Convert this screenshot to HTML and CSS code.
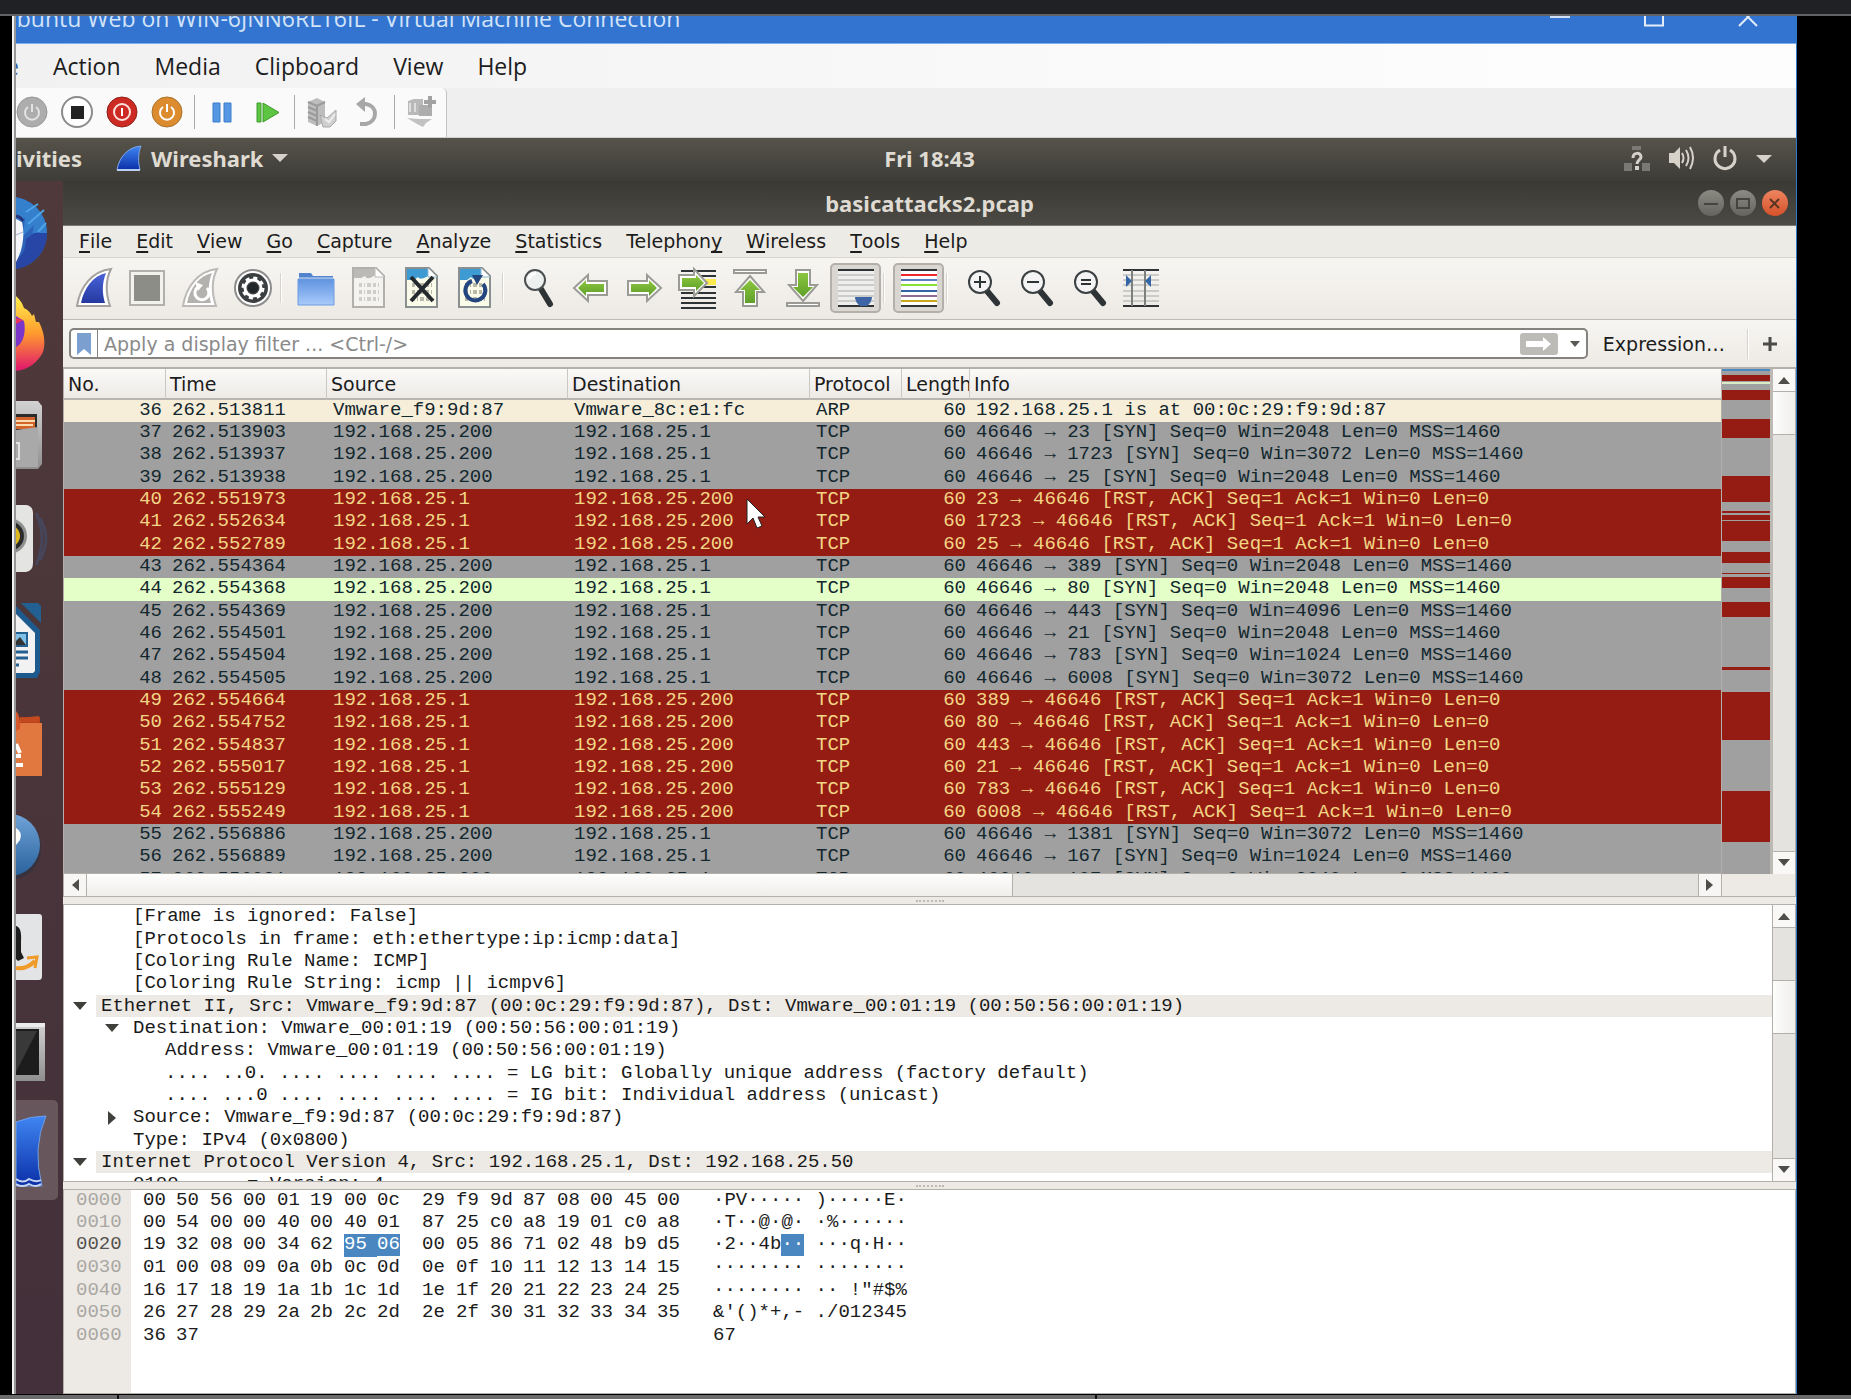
FILE: index.html
```html
<!DOCTYPE html>
<html lang="en">
<head>
    <meta charset="UTF-8">
    <meta name="viewport" content="width=device-width, initial-scale=1.0">
    <title>basicattacks2.pcap</title>
    <link rel="stylesheet" href="styles.css">
</head>
<body>
    <!-- shared shapes -->
    <svg class="defs" width="0" height="0">
        <defs>
            <linearGradient id="finBlue" x1="0" y1="0" x2="0" y2="1"><stop offset="0" stop-color="#4a63d8"/><stop offset="1" stop-color="#2438a0"/></linearGradient>
            <linearGradient id="finDock" x1="0" y1="0" x2="0" y2="1"><stop offset="0" stop-color="#3f86f2"/><stop offset="1" stop-color="#0b2fa8"/></linearGradient>
            <linearGradient id="green" x1="0" y1="0" x2="0" y2="1"><stop offset="0" stop-color="#8cc63f"/><stop offset="1" stop-color="#5fa02a"/></linearGradient>
            <linearGradient id="folder" x1="0" y1="0" x2="0" y2="1"><stop offset="0" stop-color="#5f93df"/><stop offset="1" stop-color="#a9cbfb"/></linearGradient>
            <linearGradient id="fox" x1="0" y1="0" x2="0" y2="1"><stop offset="0" stop-color="#fff04d"/><stop offset="0.5" stop-color="#ff9a2e"/><stop offset="1" stop-color="#e0146e"/></linearGradient>
            <linearGradient id="silver" x1="0" y1="0" x2="0" y2="1"><stop offset="0" stop-color="#d2d2d2"/><stop offset="1" stop-color="#8f8f8f"/></linearGradient>
            <linearGradient id="helpBlue" x1="0" y1="0" x2="0" y2="1"><stop offset="0" stop-color="#6fa3d8"/><stop offset="1" stop-color="#2a629c"/></linearGradient>
            <g id="lens">
                <path d="M24 24L34 36" stroke="#2e3436" stroke-width="6" stroke-linecap="round"/>
                <circle cx="17" cy="15" r="11" fill="#f4f4f4" stroke="#3a3f41" stroke-width="2"/>
            </g>
            <g id="bits" fill="none" stroke-width="4" stroke-dasharray="3 2 1 2 4 2">
                <path d="M9 18h20M9 25h20M9 32h20"/>
            </g>
        </defs>
    </svg>

    <div class="host-strip"></div>

    <main class="stage">
        <div class="vm">
            <header class="vm-title">
                <span class="vm-name">Ubuntu Web on WIN-6JNN6RLT6IL - Virtual Machine Connection</span>
                <div class="vm-controls">
                    <button aria-label="Minimize"><svg width="20" height="16"><path d="M0 1h20" stroke="#cfe0f7" stroke-width="2"/></svg></button>
                    <button aria-label="Maximize"><svg width="20" height="16"><path d="M1 -4V9.500H19V-4" fill="none" stroke="#e4eefb" stroke-width="2"/></svg></button>
                    <button aria-label="Close"><svg width="20" height="16"><path d="M1 10L10 1L19 10M10 1L6 -4M10 1L14 -4" fill="none" stroke="#e4eefb" stroke-width="2"/></svg></button>
                </div>
            </header>

            <nav class="vm-menu">
                <button class="cut">File</button>
                <button>Action</button>
                <button>Media</button>
                <button>Clipboard</button>
                <button>View</button>
                <button>Help</button>
            </nav>

            <div class="vm-tools">
                <div class="vm-tools-inner">
                    <button aria-label="Start"><svg width="32" height="34"><circle cx="16" cy="17" r="15" fill="#adadad" stroke="#989898"/><path d="M12 12a7 7 0 1 0 8 0M16 9v8" fill="none" stroke="#e3e3e3" stroke-width="2"/></svg></button>
                    <button aria-label="Turn off"><svg width="32" height="34"><circle cx="16" cy="17" r="15" fill="#fff" stroke="#8b8b8b" stroke-width="2"/><rect x="10" y="11" width="13" height="13" fill="#222"/></svg></button>
                    <button aria-label="Shut down"><svg width="32" height="34"><circle cx="16" cy="17" r="15" fill="#cc2a22" stroke="#8f2018"/><circle cx="16" cy="17" r="8" fill="none" stroke="#fbe3e0" stroke-width="2"/><path d="M16 13v8" stroke="#fff" stroke-width="2"/></svg></button>
                    <button aria-label="Save"><svg width="32" height="34"><circle cx="16" cy="17" r="15" fill="#dc8b2f" stroke="#a8712c"/><path d="M12 12a7 7 0 1 0 8 0M16 9v8" fill="none" stroke="#fff" stroke-width="2"/></svg></button>
                    <i class="vm-sep"></i>
                    <button aria-label="Pause"><svg width="32" height="34"><path d="M7 8h7v19H7zM18 8h7v19h-7z" fill="#5597e3" stroke="#3c7dcb"/></svg></button>
                    <button aria-label="Reset"><svg width="32" height="34"><path d="M6 8h4v19H6zM12 8L28 17.500L12 27z" fill="#5cc542" stroke="#3f9a2c"/></svg></button>
                    <i class="vm-sep"></i>
                    <button aria-label="Checkpoint"><svg width="32" height="34"><path d="M2 7l9-4l8 4v20l-8 4l-9-4z" fill="#bdbdbd"/><path d="M2 7l9 4l8-4M11 11v20M2 12l9 4M2 17l9 4M2 22l9 4" fill="none" stroke="#9a9a9a" stroke-width="2"/><path d="M14 20l7 3l9-8v11l-6 6h-7z" fill="#cfcfcf" stroke="#a9a9a9"/><path d="M19 24l4 3l6-8" fill="none" stroke="#eee" stroke-width="2"/></svg></button>
                    <button aria-label="Revert"><svg width="32" height="34"><path d="M10 9h5c12 2 12 17 0 20h-6" fill="none" stroke="#a7a7a7" stroke-width="4"/><path d="M14 2L5 9l9 8z" fill="#a7a7a7"/></svg></button>
                    <i class="vm-sep"></i>
                    <button aria-label="Enhanced session"><svg width="32" height="34"><path d="M2 6l6-2h9v16H2z" fill="#b9b9b9"/><path d="M4 8v9M9 8v9" stroke="#dedede" stroke-width="2"/><path d="M13 10h13v11H13z" fill="#adadad"/><path d="M18 7h12M24 1v12" stroke="#a2a2a2" stroke-width="4"/><path d="M1 23l11 1h14l-6 4l-3 4l-6-3z" fill="#c2c2c2"/></svg></button>
                </div>
            </div>

            <div class="gnome-bar">
                <div class="gnome-side">
                    <button class="activities">ivities</button>
                    <button class="app-menu">
                        <svg width="26" height="26"><path d="M1 25C3 12 12 2 25 1C22 8 22 17 24 25z" fill="url(#finDock)" stroke="#7fa8e8"/><path d="M1 25h23" stroke="#b9cff2" stroke-width="2"/></svg>
                        Wireshark
                        <svg width="16" height="10"><path d="M0 1h16L8 9z" fill="#d6d2ca"/></svg>
                    </button>
                </div>
                <button class="clock">Fri 18:43</button>
                <div class="gnome-side status">
                    <svg width="26" height="26"><path d="M8 1h9v4H8zM0 18h8v8H0zM18 18h8v8h-8z" fill="#7b7973"/><path d="M9 13c0-6 8-6 8-1c0 3-4 3-4 7" fill="none" stroke="#d6d2ca" stroke-width="3"/><path d="M11 21h4v4h-4z" fill="#d6d2ca"/></svg>
                    <svg width="26" height="26"><path d="M1 8h5l6-6v22l-6-6H1z" fill="#d6d2ca"/><path d="M14 8q3 5 0 10M18 5q5 8 0 16M22 2q6 11 0 22" fill="none" stroke="#d6d2ca" stroke-width="2"/></svg>
                    <svg width="26" height="26"><path d="M8 5a10 10 0 1 0 10 0M13 1v11" fill="none" stroke="#d6d2ca" stroke-width="3"/></svg>
                    <svg width="16" height="26"><path d="M0 10h16L8 18z" fill="#d6d2ca"/></svg>
                </div>
            </div>

            <div class="desktop">
                <ul class="dock">
                    <li><svg viewBox="0 0 48 102"><circle cx="-5" cy="51" r="36" fill="#2c62b8"/><path d="M-5 15A36 36 0 0 1 31 51l-9 10l2-13l-8 7l2-12L7 54l2-18l-9 5z" fill="#3480cc"/><path d="M10 30l12-8M12 42l16-14M22 50l8-9" stroke="#4fa3e6" stroke-width="2"/><path d="M31 51A36 36 0 0 1 0 87V77c8-4 10-12 10-20l8-6z" fill="#2846a5"/><path d="M0 37l6 3c3 12 1 28-6 40z" fill="#f4f6fa"/><path d="M0 34q5 1 7 5" fill="none" stroke="#27367a" stroke-width="3"/><path d="M0 53l7-3" stroke="#9fb0cc" stroke-width="1"/></svg></li>
                    <li><svg viewBox="0 0 48 102"><path d="M0 12c3 3 6 6 8 12c4 2 6 4 8 8l2-2l2 8l3 0c5 10 7 20 4 30C22 78 12 86 0 87z" fill="url(#fox)"/><path d="M0 32l8 5c2 10 0 22-8 26z" fill="#7b35c9"/><path d="M0 34l7 2l-7 4z" fill="#ec3060"/></svg></li>
                    <li><svg viewBox="0 0 48 102"><path d="M0 15h22l4 5v58l-4 5H0z" fill="url(#silver)"/><path d="M0 28h21v16H0z" fill="#2b2b2b"/><path d="M0 31h19v12H0z" fill="#d4622b"/><path d="M0 35h19M0 39h17" stroke="#f9dcae" stroke-width="2"/><path d="M0 44l22-3v40H0z" fill="#a9a9a9"/><path d="M0 57h3v16H0" fill="none" stroke="#e1e1e1" stroke-width="2"/></svg></li>
                    <li><svg viewBox="0 0 48 102"><path d="M20 25q12 25 0 52M24 30q12 20 0 42" fill="none" stroke="#474559" stroke-width="3"/><path d="M0 17h10q7 1 7 8v50q0 8-7 9H0z" fill="#e4e5e3"/><circle cx="-7" cy="48" r="18" fill="#8f9190"/><circle cx="-7" cy="48" r="15" fill="#2b2b2b"/><circle cx="-7" cy="48" r="11" fill="#dcb81c"/></svg></li>
                    <li><svg viewBox="0 0 48 102"><path d="M5 13h17l3 3v17z" fill="#236092"/><path d="M0 16l24 24v42l-3 6H0z" fill="#1d5a8d"/><path d="M0 24l19 19v38l-2 2H0z" fill="#f2f2f2"/><path d="M0 42h12v15H0z" fill="#235f90"/><path d="M0 44h10v11H0z" fill="#7fc0e8"/><path d="M0 51l4-4l6 8H0z" fill="#333"/><path d="M0 62h12M0 68h12M0 75h3" stroke="#235f90" stroke-width="3"/></svg></li>
                    <li><svg viewBox="0 0 48 102"><path d="M4 25h20v7H4z" fill="#b5421c"/><path d="M0 31h26v53H0z" fill="#e07840"/><path d="M0 19q5 5 4 18l-4 2z" fill="#d4562a"/><path d="M4 26l19-2v6H4z" fill="#c5491f"/><path d="M0 52l4 9M0 64h5M0 73h7" stroke="#fff" stroke-width="4"/></svg></li>
                    <li><svg viewBox="0 0 48 102"><circle cx="-7" cy="54" r="32" fill="#26303f" opacity="0.500"/><circle cx="-7" cy="51" r="31" fill="url(#helpBlue)"/><path d="M0 34q7 4 4 12l-4 5" fill="#fff"/></svg></li>
                    <li><svg viewBox="0 0 48 102"><path d="M0 18h23q3 0 3 3v59q0 4-3 4H0z" fill="#e3e4e5"/><path d="M0 30q6 1 5 16v10l3 6l-6 3l-2-2z" fill="#1d1d1d"/><path d="M0 72q10 2 19-7" fill="none" stroke="#f09a2a" stroke-width="4"/><path d="M11 62l10-1l-2 11" fill="none" stroke="#f09a2a" stroke-width="3"/></svg></li>
                    <li><svg viewBox="0 0 48 102"><path d="M0 25h29v58H0z" fill="url(#silver)"/><path d="M0 25h29v4H0z" fill="#ececec"/><path d="M0 31h23v46H0z" fill="#1c1c1c"/><path d="M0 33h21L0 74z" fill="#393939"/></svg></li>
                    <li class="active"><svg viewBox="0 0 48 102"><path d="M0 22q14-6 30-6q-14 32-4 70l-26 0z" fill="url(#finDock)" stroke="#6f9fe9"/><path d="M0 79q7 5 13 0q7 4 12 1M0 84q7 4 13 0q7 4 12 0" fill="none" stroke="#c5d5f3" stroke-width="2"/></svg></li>
                </ul>

                <section class="window">
                    <header class="titlebar">
                        <h1>basicattacks2.pcap</h1>
                        <div class="win-buttons">
                            <button aria-label="Minimize"><svg width="26" height="26"><path d="M6 14h14" stroke="#45443e" stroke-width="2"/></svg></button>
                            <button aria-label="Maximize"><svg width="26" height="26"><path d="M7 9h12v9H7z" fill="none" stroke="#45443e" stroke-width="2"/></svg></button>
                            <button class="close" aria-label="Close"><svg width="26" height="26"><path d="M8 9l9 9M17 9l-9 9" stroke="#5b3424" stroke-width="2"/></svg></button>
                        </div>
                    </header>

                    <nav class="menubar">
                        <button><u>F</u>ile</button>
                        <button><u>E</u>dit</button>
                        <button><u>V</u>iew</button>
                        <button><u>G</u>o</button>
                        <button><u>C</u>apture</button>
                        <button><u>A</u>nalyze</button>
                        <button><u>S</u>tatistics</button>
                        <button>Telephon<u>y</u></button>
                        <button><u>W</u>ireless</button>
                        <button><u>T</u>ools</button>
                        <button><u>H</u>elp</button>
                    </nav>

                    <div class="toolbar">
                        <button aria-label="Start capture"><svg width="38" height="42"><path d="M2 39C5 20 17 4 36 2C30 14 31 27 35 39z" fill="#fff" stroke="#a5a3a0" stroke-width="2"/><path d="M6 36C9 21 18 9 31 6C27 16 27 26 30 36z" fill="url(#finBlue)"/></svg></button>
                        <button aria-label="Stop capture"><svg width="38" height="42"><path d="M2 4h34v34H2z" fill="#f3f2ef" stroke="#b2b0ac" stroke-width="2"/><path d="M6 8h26v26H6z" fill="#8d8d88"/></svg></button>
                        <button aria-label="Restart capture"><svg width="38" height="42"><path d="M2 39C5 20 17 4 36 2C30 14 31 27 35 39z" fill="#fff" stroke="#bcbab6" stroke-width="2"/><path d="M6 36C9 21 18 9 31 6C27 16 27 26 30 36z" fill="#b3b2ae"/><path d="M17 20a7 7 0 1 0 9 1" fill="none" stroke="#fff" stroke-width="3"/><path d="M14 15l8 3l-5 6z" fill="#fff"/></svg></button>
                        <button aria-label="Capture options"><svg width="38" height="42"><circle cx="19" cy="21" r="18" fill="#fff" stroke="#8d8d8d" stroke-width="2"/><circle cx="19" cy="21" r="15" fill="#3b3f41"/><circle cx="19" cy="21" r="8" fill="#3b3f41" stroke="#fff" stroke-width="3"/><circle cx="19" cy="21" r="10" fill="none" stroke="#fff" stroke-width="3" stroke-dasharray="4 3.850"/><circle cx="19" cy="21" r="5" fill="#222628"/></svg></button>
                        <i class="sep"></i>
                        <button aria-label="Open"><svg width="38" height="42"><path d="M2 8V6h12l2 3h20v6H2z" fill="#5283cc"/><path d="M1 12h36v26H1z" fill="url(#folder)" stroke="#6f9ce0"/><path d="M2 11h34" stroke="#cfe0f8"/></svg></button>
                        <button aria-label="Save"><svg width="38" height="42"><path d="M3 1h23l8 8v31H3z" fill="#f4f3f0" stroke="#b2b0ac" stroke-width="2"/><path d="M4 2h21v6q-8 6-10 1l-4 2H4z" fill="#bcbab6"/><path d="M25 1v9h9" fill="#fff" stroke="#bcbab6"/><use href="#bits" stroke="#cfcdc9"/></svg></button>
                        <button aria-label="Close file"><svg width="38" height="42"><path d="M3 1h23l8 8v31H3z" fill="#fbfbea" stroke="#8a8f8f" stroke-width="2"/><path d="M4 2h21v7q-8 5-10 1l-4 3H4z" fill="#3d9ad3"/><path d="M25 1v9h9" fill="#fff" stroke="#8fb6cf"/><use href="#bits" stroke="#b9b9a9"/><path d="M8 10l22 24M30 10L8 34" stroke="#23292c" stroke-width="4"/></svg></button>
                        <button aria-label="Reload"><svg width="38" height="42"><path d="M3 1h23l8 8v31H3z" fill="#fbfbea" stroke="#8a8f8f" stroke-width="2"/><path d="M4 2h21v7q-8 5-10 1l-4 3H4z" fill="#3d9ad3"/><path d="M25 1v9h9" fill="#fff" stroke="#8fb6cf"/><use href="#bits" stroke="#b9b9a9"/><path d="M16 14a10 10 0 1 0 11 3" fill="none" stroke="#24467f" stroke-width="4"/><path d="M16 8h11l-6 10z" fill="#24467f"/></svg></button>
                        <i class="sep"></i>
                        <button aria-label="Find"><svg width="38" height="42"><path d="M22 22L31 37" stroke="#2e3436" stroke-width="6" stroke-linecap="round"/><circle cx="16" cy="13" r="10" fill="#eef0f0" stroke="#4a4f51" stroke-width="2"/><path d="M10 12q2-6 7-5" fill="none" stroke="#fff" stroke-width="3"/></svg></button>
                        <button aria-label="Previous packet"><svg width="38" height="42"><path d="M2 21L16 8v6h19v14H16v6z" fill="#fff" stroke="#9b9b96" stroke-width="2"/><path d="M6 21L14 13v4h18v8H14v4z" fill="url(#green)"/></svg></button>
                        <button aria-label="Next packet"><svg width="38" height="42"><path d="M36 21L22 8v6H3v14h19v6z" fill="#fff" stroke="#9b9b96" stroke-width="2"/><path d="M32 21L24 13v4H6v8h18v4z" fill="url(#green)"/></svg></button>
                        <button aria-label="Go to packet"><svg width="38" height="42"><path d="M3 4h35M3 9h35M3 20h35M3 26h35M3 31h35M3 36h35M3 41h35" stroke="#2e3436" stroke-width="2"/><path d="M27 12h11v6H27z" fill="#fce94f"/><path d="M29 16L16 2v6H1v15h15v6z" fill="#fff" stroke="#9b9b96" stroke-width="2"/><path d="M26 16L18 8v3H4v9h14v4z" fill="url(#green)"/></svg></button>
                        <button aria-label="First packet"><svg width="38" height="42"><path d="M3 3h32v3H3z" fill="#fff" stroke="#9b9b96" stroke-width="2"/><path d="M19 9L33 25h-7v14H12V25H5z" fill="#fff" stroke="#9b9b96" stroke-width="2"/><path d="M19 13L29 23h-5v13H14V23H9z" fill="url(#green)"/></svg></button>
                        <button aria-label="Last packet"><svg width="38" height="42"><path d="M3 36h32v3H3z" fill="#fff" stroke="#9b9b96" stroke-width="2"/><path d="M19 34L33 18h-7V3H12v15H5z" fill="#fff" stroke="#9b9b96" stroke-width="2"/><path d="M19 30L29 20h-5V6H14v14H9z" fill="url(#green)"/></svg></button>
                        <button class="pressed" aria-label="Auto scroll"><svg width="38" height="42"><path d="M1 2h36v38H1z" fill="#eeeeec"/><path d="M1 8h36M1 13h36M1 18h36M1 24h36M1 29h36M1 34h36" stroke="#c9ccc8" stroke-width="2"/><path d="M1 3h36M1 39h36" stroke="#2e3436" stroke-width="2"/><path d="M18 30h17q0 5-5 9h-7q-5-4-5-9z" fill="#3d65a5"/></svg></button>
                        <i class="sep"></i>
                        <button class="pressed" aria-label="Colorize"><svg width="38" height="42"><path d="M1 2h36v38H1z" fill="#fff"/><path d="M1 3h36M1 39h36" stroke="#2e3436" stroke-width="2"/><path d="M1 8h36" stroke="#ef2929" stroke-width="2"/><path d="M1 13h36" stroke="#5b7fc0" stroke-width="2"/><path d="M1 18h36" stroke="#8ae234" stroke-width="2"/><path d="M1 24h36" stroke="#3465a4" stroke-width="2"/><path d="M1 29h36" stroke="#8f6a96" stroke-width="2"/><path d="M1 34h36" stroke="#c9a820" stroke-width="2"/></svg></button>
                        <i class="sep"></i>
                        <button aria-label="Zoom in"><svg width="38" height="42"><use href="#lens"/><path d="M11 15h12M17 9v12" stroke="#2e3436" stroke-width="2"/></svg></button>
                        <button aria-label="Zoom out"><svg width="38" height="42"><use href="#lens"/><path d="M11 15h12" stroke="#2e3436" stroke-width="2"/></svg></button>
                        <button aria-label="Normal size"><svg width="38" height="42"><use href="#lens"/><path d="M12 13h10M12 17h10" stroke="#2e3436" stroke-width="2"/></svg></button>
                        <button aria-label="Resize columns"><svg width="38" height="42"><path d="M1 8h36M1 13h36M1 18h36M1 24h36M1 29h36M1 34h36" stroke="#c9ccc8" stroke-width="2"/><path d="M1 3h36M1 39h36" stroke="#2e3436" stroke-width="2"/><path d="M10 3v36M23 3v36" stroke="#7d807c" stroke-width="2"/><path d="M4 8l6 6l-6 6zM29 8l-6 6l6 6z" fill="#3465a4"/></svg></button>
                    </div>

                    <div class="filterbar">
                        <div class="filter">
                            <button class="bookmark" aria-label="Bookmarks"><svg width="14" height="22"><path d="M0 0h14v22l-7-6l-7 6z" fill="#7ba0d0"/></svg></button>
                            <input type="text" aria-label="Display filter" placeholder="Apply a display filter ... &lt;Ctrl-/&gt;">
                            <button class="apply" aria-label="Apply"><svg width="28" height="14"><path d="M1 4h17V0l8 7l-8 7v-4H1z" fill="#fff"/></svg></button>
                            <button class="recent" aria-label="Recent filters"><svg width="10" height="6"><path d="M0 0h10L5 6z" fill="#5a5a55"/></svg></button>
                        </div>
                        <button class="expression">Expression…</button>
                        <i class="sep"></i>
                        <button class="plus" aria-label="Add filter button"><svg width="14" height="14"><path d="M0 7h14M7 0v14" stroke="#4a4a46" stroke-width="3"/></svg></button>
                    </div>

                    <div class="pane packets">
                        <div class="packet-area">
                            <div class="table-wrap">
                                <table class="packet-table">
                                    <colgroup><col class="c-no"><col class="c-time"><col class="c-src"><col class="c-dst"><col class="c-proto"><col class="c-len"><col></colgroup>
                                    <thead>
                                        <tr><th>No.</th><th>Time</th><th>Source</th><th>Destination</th><th>Protocol</th><th>Length</th><th>Info</th></tr>
                                    </thead>
                                    <tbody>
                                        <tr class="arp"><td>36</td><td>262.513811</td><td>Vmware_f9:9d:87</td><td>Vmware_8c:e1:fc</td><td>ARP</td><td>60</td><td>192.168.25.1 is at 00:0c:29:f9:9d:87</td></tr>
                                        <tr><td>37</td><td>262.513903</td><td>192.168.25.200</td><td>192.168.25.1</td><td>TCP</td><td>60</td><td>46646 → 23 [SYN] Seq=0 Win=2048 Len=0 MSS=1460</td></tr>
                                        <tr><td>38</td><td>262.513937</td><td>192.168.25.200</td><td>192.168.25.1</td><td>TCP</td><td>60</td><td>46646 → 1723 [SYN] Seq=0 Win=3072 Len=0 MSS=1460</td></tr>
                                        <tr><td>39</td><td>262.513938</td><td>192.168.25.200</td><td>192.168.25.1</td><td>TCP</td><td>60</td><td>46646 → 25 [SYN] Seq=0 Win=2048 Len=0 MSS=1460</td></tr>
                                        <tr class="rst"><td>40</td><td>262.551973</td><td>192.168.25.1</td><td>192.168.25.200</td><td>TCP</td><td>60</td><td>23 → 46646 [RST, ACK] Seq=1 Ack=1 Win=0 Len=0</td></tr>
                                        <tr class="rst"><td>41</td><td>262.552634</td><td>192.168.25.1</td><td>192.168.25.200</td><td>TCP</td><td>60</td><td>1723 → 46646 [RST, ACK] Seq=1 Ack=1 Win=0 Len=0</td></tr>
                                        <tr class="rst"><td>42</td><td>262.552789</td><td>192.168.25.1</td><td>192.168.25.200</td><td>TCP</td><td>60</td><td>25 → 46646 [RST, ACK] Seq=1 Ack=1 Win=0 Len=0</td></tr>
                                        <tr><td>43</td><td>262.554364</td><td>192.168.25.200</td><td>192.168.25.1</td><td>TCP</td><td>60</td><td>46646 → 389 [SYN] Seq=0 Win=2048 Len=0 MSS=1460</td></tr>
                                        <tr class="http"><td>44</td><td>262.554368</td><td>192.168.25.200</td><td>192.168.25.1</td><td>TCP</td><td>60</td><td>46646 → 80 [SYN] Seq=0 Win=2048 Len=0 MSS=1460</td></tr>
                                        <tr><td>45</td><td>262.554369</td><td>192.168.25.200</td><td>192.168.25.1</td><td>TCP</td><td>60</td><td>46646 → 443 [SYN] Seq=0 Win=4096 Len=0 MSS=1460</td></tr>
                                        <tr><td>46</td><td>262.554501</td><td>192.168.25.200</td><td>192.168.25.1</td><td>TCP</td><td>60</td><td>46646 → 21 [SYN] Seq=0 Win=2048 Len=0 MSS=1460</td></tr>
                                        <tr><td>47</td><td>262.554504</td><td>192.168.25.200</td><td>192.168.25.1</td><td>TCP</td><td>60</td><td>46646 → 783 [SYN] Seq=0 Win=1024 Len=0 MSS=1460</td></tr>
                                        <tr><td>48</td><td>262.554505</td><td>192.168.25.200</td><td>192.168.25.1</td><td>TCP</td><td>60</td><td>46646 → 6008 [SYN] Seq=0 Win=3072 Len=0 MSS=1460</td></tr>
                                        <tr class="rst"><td>49</td><td>262.554664</td><td>192.168.25.1</td><td>192.168.25.200</td><td>TCP</td><td>60</td><td>389 → 46646 [RST, ACK] Seq=1 Ack=1 Win=0 Len=0</td></tr>
                                        <tr class="rst"><td>50</td><td>262.554752</td><td>192.168.25.1</td><td>192.168.25.200</td><td>TCP</td><td>60</td><td>80 → 46646 [RST, ACK] Seq=1 Ack=1 Win=0 Len=0</td></tr>
                                        <tr class="rst"><td>51</td><td>262.554837</td><td>192.168.25.1</td><td>192.168.25.200</td><td>TCP</td><td>60</td><td>443 → 46646 [RST, ACK] Seq=1 Ack=1 Win=0 Len=0</td></tr>
                                        <tr class="rst"><td>52</td><td>262.555017</td><td>192.168.25.1</td><td>192.168.25.200</td><td>TCP</td><td>60</td><td>21 → 46646 [RST, ACK] Seq=1 Ack=1 Win=0 Len=0</td></tr>
                                        <tr class="rst"><td>53</td><td>262.555129</td><td>192.168.25.1</td><td>192.168.25.200</td><td>TCP</td><td>60</td><td>783 → 46646 [RST, ACK] Seq=1 Ack=1 Win=0 Len=0</td></tr>
                                        <tr class="rst"><td>54</td><td>262.555249</td><td>192.168.25.1</td><td>192.168.25.200</td><td>TCP</td><td>60</td><td>6008 → 46646 [RST, ACK] Seq=1 Ack=1 Win=0 Len=0</td></tr>
                                        <tr><td>55</td><td>262.556886</td><td>192.168.25.200</td><td>192.168.25.1</td><td>TCP</td><td>60</td><td>46646 → 1381 [SYN] Seq=0 Win=3072 Len=0 MSS=1460</td></tr>
                                        <tr><td>56</td><td>262.556889</td><td>192.168.25.200</td><td>192.168.25.1</td><td>TCP</td><td>60</td><td>46646 → 167 [SYN] Seq=0 Win=1024 Len=0 MSS=1460</td></tr>
                                        <tr><td>57</td><td>262.556891</td><td>192.168.25.200</td><td>192.168.25.1</td><td>TCP</td><td>60</td><td>46646 → 187 [SYN] Seq=0 Win=2048 Len=0 MSS=1460</td></tr>
                                    </tbody>
                                </table>
                            </div>
                            <div class="hscroll">
                                <button aria-label="Scroll left"><svg width="8" height="12"><path d="M8 0v12L1 6z" fill="#4d4d49"/></svg></button>
                                <div class="track"><div class="thumb"></div></div>
                                <button aria-label="Scroll right"><svg width="8" height="12"><path d="M0 0v12l7-6z" fill="#4d4d49"/></svg></button>
                            </div>
                        </div>
                        <div class="packet-side">
                            <div class="side-row">
                                <svg class="minimap" width="48" height="505" viewBox="0 0 48 505">
                                    <path d="M0 0h48v505H0z" fill="#a0a0a0"/>
                                    <path d="M0 0h48v2H0z" fill="#4a8ac4"/>
                                    <path d="M0 13h48v2H0z" fill="#dcebc6"/>
                                    <path d="M0 6h48v6H0zM0 21h48v10H0zM0 50h48v19H0zM0 107h48v26H0zM0 142h48v2H0zM0 146h48v5H0zM0 152h48v20H0zM0 183h48v11H0zM0 204h48v1H0zM0 208h48v11H0zM0 233h48v15H0zM0 298h48v3H0zM0 323h48v48H0zM0 422h48v51H0z" fill="#951c13"/>
                                </svg>
                                <div class="vscroll">
                                    <button aria-label="Scroll up"><svg width="12" height="8"><path d="M0 8h12L6 1z" fill="#4d4d49"/></svg></button>
                                    <div class="track"><div class="thumb thumb-packets"></div></div>
                                    <button aria-label="Scroll down"><svg width="12" height="8"><path d="M0 0h12L6 7z" fill="#4d4d49"/></svg></button>
                                </div>
                            </div>
                            <div class="corner"></div>
                        </div>
                    </div>

                    <div class="splitter"><i></i></div>

                    <div class="pane details">
                        <div class="tree">
                            <div class="row lv1"><span class="twisty"></span><span class="label">[Frame is ignored: False]</span></div>
                            <div class="row lv1"><span class="twisty"></span><span class="label">[Protocols in frame: eth:ethertype:ip:icmp:data]</span></div>
                            <div class="row lv1"><span class="twisty"></span><span class="label">[Coloring Rule Name: ICMP]</span></div>
                            <div class="row lv1"><span class="twisty"></span><span class="label">[Coloring Rule String: icmp || icmpv6]</span></div>
                            <div class="row section"><span class="twisty"><svg width="14" height="8"><path d="M0 0h14L7 8z" fill="#3f3f3c"/></svg></span><span class="label">Ethernet II, Src: Vmware_f9:9d:87 (00:0c:29:f9:9d:87), Dst: Vmware_00:01:19 (00:50:56:00:01:19)</span></div>
                            <div class="row lv1"><span class="twisty"><svg width="14" height="8"><path d="M0 0h14L7 8z" fill="#3f3f3c"/></svg></span><span class="label">Destination: Vmware_00:01:19 (00:50:56:00:01:19)</span></div>
                            <div class="row lv2"><span class="twisty"></span><span class="label">Address: Vmware_00:01:19 (00:50:56:00:01:19)</span></div>
                            <div class="row lv2"><span class="twisty"></span><span class="label">.... ..0. .... .... .... .... = LG bit: Globally unique address (factory default)</span></div>
                            <div class="row lv2"><span class="twisty"></span><span class="label">.... ...0 .... .... .... .... = IG bit: Individual address (unicast)</span></div>
                            <div class="row lv1"><span class="twisty"><svg width="14" height="14"><path d="M3 0v14l8-7z" fill="#3f3f3c"/></svg></span><span class="label">Source: Vmware_f9:9d:87 (00:0c:29:f9:9d:87)</span></div>
                            <div class="row lv1"><span class="twisty"></span><span class="label">Type: IPv4 (0x0800)</span></div>
                            <div class="row section"><span class="twisty"><svg width="14" height="8"><path d="M0 0h14L7 8z" fill="#3f3f3c"/></svg></span><span class="label">Internet Protocol Version 4, Src: 192.168.25.1, Dst: 192.168.25.50</span></div>
                            <div class="row lv1"><span class="twisty"></span><span class="label">0100 .... = Version: 4</span></div>
                        </div>
                        <div class="vscroll">
                            <button aria-label="Scroll up"><svg width="12" height="8"><path d="M0 8h12L6 1z" fill="#4d4d49"/></svg></button>
                            <div class="track"><div class="thumb thumb-details"></div></div>
                            <button aria-label="Scroll down"><svg width="12" height="8"><path d="M0 0h12L6 7z" fill="#4d4d49"/></svg></button>
                        </div>
                    </div>

                    <div class="splitter"><i></i></div>

                    <div class="pane bytes">
                        <table class="hex">
                            <tbody>
                                <tr><th>0000</th><td>00</td><td>50</td><td>56</td><td>00</td><td>01</td><td>19</td><td>00</td><td>0c</td><td class="half">29</td><td>f9</td><td>9d</td><td>87</td><td>08</td><td>00</td><td>45</td><td>00</td><td class="ascii">·PV····· )·····E·</td></tr>
                                <tr><th>0010</th><td>00</td><td>54</td><td>00</td><td>00</td><td>40</td><td>00</td><td>40</td><td>01</td><td class="half">87</td><td>25</td><td>c0</td><td>a8</td><td>19</td><td>01</td><td>c0</td><td>a8</td><td class="ascii">·T··@·@· ·%······</td></tr>
                                <tr class="current"><th>0020</th><td>19</td><td>32</td><td>08</td><td>00</td><td>34</td><td>62</td><td class="sel">95</td><td><mark>06</mark></td><td class="half">00</td><td>05</td><td>86</td><td>71</td><td>02</td><td>48</td><td>b9</td><td>d5</td><td class="ascii">·2··4b<mark>··</mark> ···q·H··</td></tr>
                                <tr><th>0030</th><td>01</td><td>00</td><td>08</td><td>09</td><td>0a</td><td>0b</td><td>0c</td><td>0d</td><td class="half">0e</td><td>0f</td><td>10</td><td>11</td><td>12</td><td>13</td><td>14</td><td>15</td><td class="ascii">········ ········</td></tr>
                                <tr><th>0040</th><td>16</td><td>17</td><td>18</td><td>19</td><td>1a</td><td>1b</td><td>1c</td><td>1d</td><td class="half">1e</td><td>1f</td><td>20</td><td>21</td><td>22</td><td>23</td><td>24</td><td>25</td><td class="ascii">········ ·· !"#$%</td></tr>
                                <tr><th>0050</th><td>26</td><td>27</td><td>28</td><td>29</td><td>2a</td><td>2b</td><td>2c</td><td>2d</td><td class="half">2e</td><td>2f</td><td>30</td><td>31</td><td>32</td><td>33</td><td>34</td><td>35</td><td class="ascii">&amp;'()*+,- ./012345</td></tr>
                                <tr><th>0060</th><td>36</td><td>37</td><td></td><td></td><td></td><td></td><td></td><td></td><td class="half"></td><td></td><td></td><td></td><td></td><td></td><td></td><td></td><td class="ascii">67</td></tr>
                            </tbody>
                        </table>
                    </div>
                </section>
            </div>
        </div>
    </main>

    <footer class="host-foot"><i></i><i></i></footer>

    <svg class="pointer" width="20" height="32" viewBox="0 0 20 32"><path d="M1 1v25l6-6l4 10l5-2l-4-9h7z" fill="#fff" stroke="#222" stroke-width="1"/></svg>
</body>
</html>
```
FILE: styles.css
```css
* {
    box-sizing: border-box;
}

body {
    margin: 0;
    height: 100vh;
    display: flex;
    flex-direction: column;
    overflow: hidden;
    background: #000;
    font-family: "DejaVu Sans", sans-serif;
    font-size: 19px;
    color: #1c1c1c;
}

button {
    margin: 0;
    padding: 0;
    border: none;
    background: none;
    font: inherit;
    color: inherit;
    display: flex;
    align-items: center;
    justify-content: center;
    flex: none;
    white-space: nowrap;
}

svg {
    display: block;
    flex: none;
}

.defs {
    position: absolute;
}

.host-strip {
    height: 16px;
    flex: none;
    background: #202125;
    border-bottom: 2px solid #5f6164;
}

.host-foot {
    height: 5px;
    flex: none;
    display: flex;
    justify-content: space-between;
    padding: 0 754px 0 117px;
    background: #6b6b6b;
    border-top: 1px solid #000;
}

.host-foot i {
    width: 2px;
    background: #111;
}

.stage {
    flex: 1;
    min-height: 0;
    display: flex;
    padding: 0 54px 0 12px;
}

/* virtual machine window */
.vm {
    flex: 1;
    min-width: 0;
    display: flex;
    flex-direction: column;
    padding-left: 2px;
    border-left: 2px solid #f2f2f2;
    border-right: 1px solid #2f77c8;
    background: #97979a;
    overflow: hidden;
}

.vm-title {
    height: 28px;
    flex: none;
    display: flex;
    justify-content: space-between;
    align-items: flex-start;
    overflow: hidden;
    background: #3274d0;
    border-bottom: 1px solid #7fb0ee;
    color: #d3e3f8;
    font-family: "Open Sans", sans-serif;
    font-size: 23px;
    line-height: 22px;
}

.vm-name {
    margin: -9px 0 0 -16px;
    white-space: nowrap;
}

.vm-controls {
    display: flex;
    gap: 74px;
    padding-right: 38px;
}

.vm-menu {
    height: 44px;
    flex: none;
    display: flex;
    gap: 34px;
    background: linear-gradient(90deg, #f1f1f1, #fdfdfd 85%);
    font-family: "Open Sans", sans-serif;
    font-size: 23px;
    line-height: 46px;
}

.vm-menu .cut {
    width: 3px;
    overflow: hidden;
    justify-content: flex-end;
    color: #2f62a8;
}

.vm-tools {
    height: 50px;
    flex: none;
    display: flex;
    background: #efefef;
    border-bottom: 1px solid #cfcfcd;
}

.vm-tools-inner {
    display: flex;
    align-items: center;
    gap: 13px;
    padding: 0 8px 2px 0;
    background: #fafafa;
    border-right: 1px solid #c2c2c2;
    border-radius: 0 5px 0 0;
}

.vm-sep {
    width: 1px;
    height: 34px;
    margin: 0 -2px;
    background: #a9a9a9;
}

/* gnome panel */
.gnome-bar {
    height: 43px;
    flex: none;
    display: flex;
    align-items: center;
    padding: 0 24px 3px 0;
    background: linear-gradient(#56534a, #3d3c37);
    color: #dfdbd2;
    font-family: "Noto Sans", sans-serif;
    font-size: 22px;
    font-weight: bold;
    line-height: 30px;
}

.gnome-side {
    flex: 1;
    display: flex;
    align-items: center;
    gap: 34px;
}

.app-menu {
    gap: 9px;
}

.clock {
    margin-left: 71px;
}

.status {
    justify-content: flex-end;
    gap: 18px;
}

.desktop {
    flex: 1;
    min-height: 0;
    display: flex;
    background: linear-gradient(#4f393a, #43303a);
}

.dock {
    width: 47px;
    flex: none;
    margin: 0;
    padding: 1px 0 0;
    list-style: none;
    overflow: hidden;
}

.dock li {
    height: 102px;
}

.dock svg {
    width: 48px;
    height: 102px;
}

.dock .active {
    width: 42px;
    height: 100px;
    border-radius: 0 5px 5px 0;
    background: #67565b;
}

/* wireshark window */
.window {
    flex: 1;
    min-width: 0;
    display: flex;
    flex-direction: column;
    background: #edeae5;
}

.titlebar {
    height: 45px;
    flex: none;
    display: flex;
    align-items: center;
    padding: 0 8px 1px 98px;
    background: linear-gradient(#3a3934, #4b4a44);
    border-bottom: 1px solid #7a7974;
}

.titlebar h1 {
    flex: 1;
    margin: 0;
    text-align: center;
    color: #dfdbd2;
    font-family: "Noto Sans", sans-serif;
    font-size: 22px;
    font-weight: bold;
    line-height: 30px;
}

.win-buttons {
    display: flex;
    gap: 6px;
}

.win-buttons button {
    width: 26px;
    height: 26px;
    border-radius: 50%;
    background: linear-gradient(#8c8b83, #65645d);
}

.win-buttons .close {
    background: linear-gradient(#ee8560, #d4512a);
}

.menubar {
    height: 32px;
    flex: none;
    display: flex;
    gap: 24px;
    padding: 0 0 2px 16px;
    background: #edebe6;
    border-bottom: 1px solid #d8d5d0;
}

.menubar u {
    text-decoration-thickness: 2px;
    text-underline-offset: 3px;
    text-decoration-skip-ink: none;
}

.toolbar {
    height: 62px;
    flex: none;
    display: flex;
    align-items: center;
    gap: 2px;
    padding: 0 0 2px 5px;
    background: linear-gradient(#f7f5f2, #edeae5);
    border-bottom: 1px solid #bdbab5;
}

.toolbar button {
    width: 51px;
    height: 50px;
}

.toolbar .pressed {
    border: 2px solid #b3afab;
    border-radius: 5px;
    background: #dad6d2;
}

.sep {
    width: 8px;
    height: 30px;
    flex: none;
    border-left: 1px solid #d6d3ce;
    background: linear-gradient(90deg, #fff 1px, transparent 1px);
}

.filterbar {
    height: 47px;
    flex: none;
    display: flex;
    align-items: center;
    padding: 0 19px 0 6px;
    background: linear-gradient(#f7f5f2, #edeae5);
}

.filter {
    flex: 1;
    height: 31px;
    display: flex;
    align-items: center;
    border: 2px solid #85837f;
    border-radius: 5px;
    background: #fff;
}

.bookmark {
    width: 27px;
    height: 27px;
    border-right: 1px solid #85837f;
}

.filter input {
    flex: 1;
    min-width: 0;
    padding: 0 6px;
    border: none;
    outline: none;
    background: none;
    font: inherit;
}

.filter input::placeholder {
    color: #8a8a8a;
}

.apply {
    width: 38px;
    height: 22px;
    border-radius: 3px;
    background: #bdbbb8;
}

.recent {
    padding: 0 6px 0 12px;
}

.expression {
    margin: 0 22px 0 15px;
}

.plus {
    margin-left: 8px;
}

/* panes */
.pane {
    flex: none;
    display: flex;
    overflow: hidden;
    border: 1px solid #b3b0ab;
}

.packets {
    height: 530px;
    border-top: 2px solid #b3b0ab;
}

.packet-area {
    flex: 1;
    min-width: 0;
    display: flex;
    flex-direction: column;
    border-right: 1px solid #b3b0ab;
}

.table-wrap {
    flex: 1;
    min-height: 0;
    overflow: hidden;
}

.packet-table {
    width: 100%;
    table-layout: fixed;
    border-collapse: separate;
    border-spacing: 0;
}

.c-no { width: 102px; }
.c-time { width: 161px; }
.c-src { width: 241px; }
.c-dst { width: 242px; }
.c-proto { width: 92px; }
.c-len { width: 68px; }

.packet-table th {
    height: 31px;
    padding: 0 0 0 4px;
    border-right: 1px solid #cbc8c4;
    border-bottom: 2px solid #b8b5b1;
    background: linear-gradient(#fbfaf8, #edeae7);
    font-weight: normal;
    text-align: left;
    white-space: nowrap;
    overflow: hidden;
}

.packet-table th:last-child {
    border-right: none;
}

.packet-table td {
    height: 22px;
    padding: 0 0 0 6px;
    vertical-align: top;
    background: #a0a0a0;
    color: #12272e;
    font-family: "Liberation Mono", monospace;
    line-height: 20px;
    white-space: pre;
}

/* rows run 22, 22, 23 */
.packet-table tr:nth-child(3n) td,
.hex tr:nth-child(3n) th,
.hex tr:nth-child(3n) td {
    height: 23px;
}

.packet-table td:first-child,
.packet-table td:nth-child(6) {
    padding: 0 4px 0 0;
    text-align: right;
}

.packet-table .arp td { background: #f7eeda; }
.packet-table .http td { background: #e4ffc7; }
.packet-table .rst td {
    background: #951c13;
    color: #f3d685;
}

.hscroll {
    height: 23px;
    flex: none;
    display: flex;
    border-top: 1px solid #b3b0ab;
}

.hscroll button {
    width: 22px;
    background: #f7f6f4;
}

.track {
    flex: 1;
    background: #e4e3df;
}

.hscroll .track {
    border: solid #b3b0ab;
    border-width: 0 1px;
}

.hscroll .thumb {
    width: 57.5%;
    height: 100%;
    border-right: 1px solid #b3b0ab;
    background: linear-gradient(#fdfdfc, #efeeeb);
}

.packet-side {
    display: flex;
    flex-direction: column;
}

.side-row {
    flex: 1;
    min-height: 0;
    display: flex;
    gap: 3px;
    background: #bdbab6;
}

.corner {
    height: 22px;
}

.vscroll {
    width: 22px;
    flex: none;
    display: flex;
    flex-direction: column;
}

.vscroll button {
    height: 22px;
    background: #f9f8f6;
}

.vscroll .track {
    border: solid #b3b0ab;
    border-width: 1px 0;
}

.vscroll .thumb {
    border: solid #b3b0ab;
    border-width: 1px 0;
    background: linear-gradient(90deg, #fdfdfc, #efeeeb);
}

.vscroll .thumb-packets {
    height: 43px;
    border-top: none;
}

.vscroll .thumb-details {
    height: 54px;
    margin-top: 52px;
}

.splitter {
    height: 7px;
    flex: none;
    display: flex;
    align-items: center;
    justify-content: center;
}

.splitter i {
    width: 28px;
    border-top: 2px dotted #bdbab5;
}

.details {
    height: 278px;
    background: #fff;
    font-family: "Liberation Mono", monospace;
    color: #1a1a1a;
}

.details .vscroll {
    border-left: 1px solid #b3b0ab;
    width: 23px;
}

.tree {
    flex: 1;
    min-width: 0;
    overflow: hidden;
}

.row {
    height: 22px;
    display: flex;
    line-height: 22px;
    white-space: pre;
}

.row:nth-child(3n + 1) {
    height: 23px;
}

.lv1 { padding-left: 32px; }
.lv2 { padding-left: 64px; }

.twisty {
    width: 32px;
    flex: none;
    display: flex;
    align-items: center;
    justify-content: center;
}

.label {
    flex: 1;
    padding-left: 5px;
}

.section .label {
    background: #edeae5;
}

.bytes {
    flex: 1;
    min-height: 0;
    background: linear-gradient(90deg, #edeae5 67px, #fff 67px);
    font-family: "Liberation Mono", monospace;
}

.hex {
    height: 157px;
    border-collapse: separate;
    border-spacing: 0;
}

.hex th,
.hex td {
    height: 22px;
    padding: 0;
    line-height: 20px;
    text-align: left;
    vertical-align: top;
    white-space: pre;
}

.hex th {
    width: 79px;
    min-width: 79px;
    padding-left: 12px;
    font-weight: normal;
    color: #a9a7a3;
}

.hex .current th {
    color: #55534f;
}

.hex td {
    width: 33px;
    min-width: 33px;
}

.hex td:nth-child(odd) {
    width: 34px;
    min-width: 34px;
}

.hex .half {
    width: 45px;
    min-width: 45px;
    padding-left: 11px;
}

.hex .ascii {
    width: auto;
    padding-left: 22px;
}

.hex mark {
    display: inline-block;
    height: 22px;
}

.hex .sel,
.hex mark {
    background: #4a87c0;
    color: #fff;
}

/* mouse cursor floats over the packet list */
.pointer {
    position: absolute;
    left: 746px;
    top: 498px;
}
```
